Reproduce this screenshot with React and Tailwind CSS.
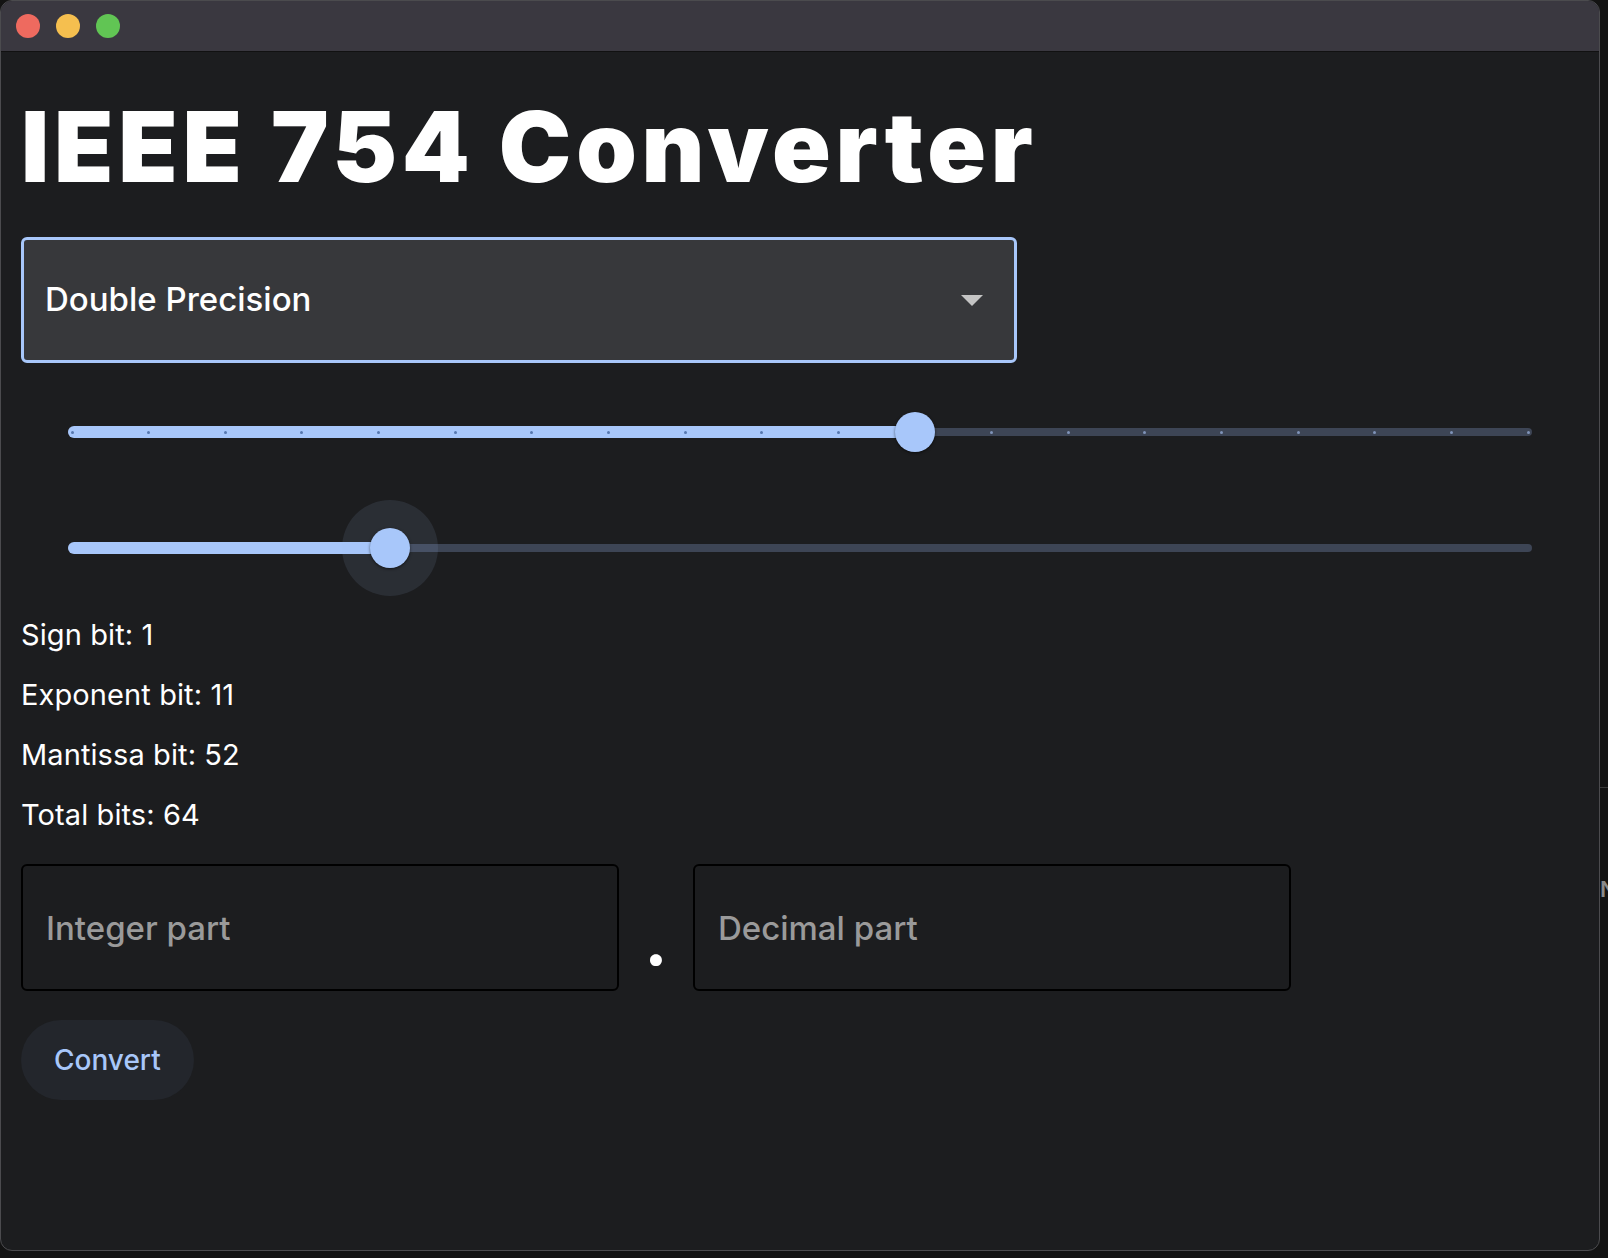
import React from 'react';

const TRACK = 1464;
const tickPos = Array.from({ length: 20 }, (_, i) => 4 + i * ((TRACK - 8) / 19));

function Slider({ pos, ticks, halo }) {
  return (
    <div className="relative h-[96px] ml-[47px] w-[1464px]">
      {/* inactive track */}
      <div className="absolute left-0 right-0 top-[44px] h-[8px] rounded-full bg-[#3d4555]" />
      {/* active track */}
      <div
        className="absolute left-0 top-[42px] h-[12px] rounded-l-full bg-[#a8c7fa]"
        style={{ width: pos }}
      />
      {ticks &&
        tickPos.map((x, i) => (
          <div
            key={i}
            className={
              'absolute top-[46.5px] w-[3px] h-[3px] rounded-full ' +
              (x < pos ? 'bg-[#5677ae]' : 'bg-[#7f93b8]')
            }
            style={{ left: x - 1.5 }}
          />
        ))}
      {halo && (
        <div
          className="absolute top-0 w-[96px] h-[96px] rounded-full bg-[#a8c7fa]/10"
          style={{ left: pos - 48 }}
        />
      )}
      <div
        className="absolute top-[28px] w-[40px] h-[40px] rounded-full bg-[#a8c7fa] shadow-[0_1px_3px_rgba(0,0,0,0.55)]"
        style={{ left: pos - 20 }}
      />
    </div>
  );
}

function App() {
  return (
    <div className="relative w-[1608px] h-[1258px] bg-[#131313] overflow-hidden font-['Inter',sans-serif]">
      {/* stuff behind the window */}
      <div className="absolute left-[1600px] top-[787px] w-[8px] h-[1px] bg-[#3a3a3a]" />
      <div className="absolute left-[1600px] top-[878px] text-[22px] font-semibold text-[#8a8a8a] leading-none">N</div>

      <div className="relative w-[1600px] h-[1251px] rounded-[12px] border border-[#4b4b4e] bg-[#1c1d1f] overflow-hidden flex flex-col">
        <div className="h-[51px] shrink-0 bg-[#3a3840] border-b border-[#111] flex items-center gap-[16px] pl-[15px]">
          <div className="w-[24px] h-[24px] rounded-full bg-[#ee6a5f]" />
          <div className="w-[24px] h-[24px] rounded-full bg-[#f5bf4f]" />
          <div className="w-[24px] h-[24px] rounded-full bg-[#61c554]" />
        </div>

        <div className="flex flex-col pl-[20px] pt-[46px]">
          <h1 className="text-[97px] leading-none font-black text-white tracking-[4.8px]">
            IEEE 754 Converter
          </h1>

          <div className="mt-[42px] w-[996px] h-[126px] rounded-[6px] border-[3px] border-[#a8c7fa] bg-[#37383b] flex items-center justify-between pl-[21px] pr-[31px]">
            <span className="text-[33px] font-medium text-white">Double Precision</span>
            <svg width="22" height="11" viewBox="0 0 22 11">
              <polygon points="0,0 22,0 11,11" fill="#c4c4c4" />
            </svg>
          </div>

          <div className="mt-[21px]">
            <Slider pos={847} ticks />
          </div>
          <div className="mt-[20px]">
            <Slider pos={322} halo />
          </div>

          <div className="mt-[21px] flex flex-col gap-[24px] text-[29px] leading-[36px] tracking-[0.1px] text-white">
            <p>Sign bit: 1</p>
            <p>Exponent bit: 11</p>
            <p>Mantissa bit: 52</p>
            <p>Total bits: 64</p>
          </div>

          <div className="mt-[31px] flex items-start">
            <input
              placeholder="Integer part"
              className="w-[598px] h-[127px] rounded-[6px] border-2 border-black bg-transparent pl-[23px] text-[33px] font-medium text-white placeholder-[#9a9a9a] outline-none"
            />
            <div className="w-[74px] flex justify-center">
              <span className="mt-[41px] text-[70px] leading-none font-bold text-white">.</span>
            </div>
            <input
              placeholder="Decimal part"
              className="w-[598px] h-[127px] rounded-[6px] border-2 border-black bg-transparent pl-[23px] text-[33px] font-medium text-white placeholder-[#9a9a9a] outline-none"
            />
          </div>

          <div className="mt-[29px]">
            <button className="h-[80px] px-[33px] rounded-full bg-[#23262c] text-[28px] font-medium text-[#a8c7fa]">
              Convert
            </button>
          </div>
        </div>
      </div>
    </div>
  );
}

export default App;
